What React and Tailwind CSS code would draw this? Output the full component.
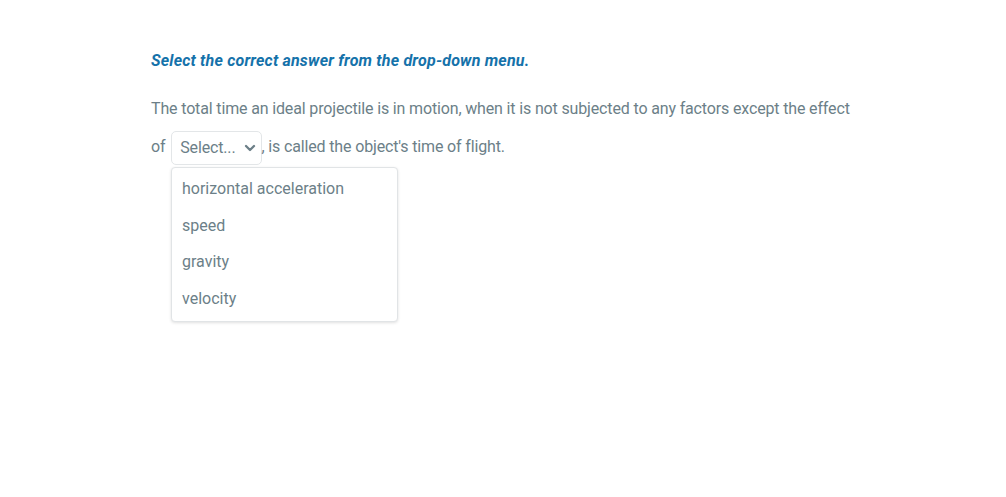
import { ChevronDown } from "lucide-react";

const options = ["horizontal acceleration", "speed", "gravity", "velocity"];

export default function App() {
  return (
    <div className="min-h-[497px] bg-white font-['Roboto',sans-serif] text-[#6c7f88]">
      <div className="pl-[151px] pt-[51px]">
        <h2 className="text-[16px] font-bold italic tracking-[0.2px] text-[#1572aa] leading-[20px]">
          Select the correct answer from the drop-down menu.
        </h2>
        <div className="relative mt-[19px] w-[706px]">
          <p className="text-[16px] tracking-[-0.15px] leading-[38px]">
            The total time an ideal projectile is in motion, when it is not subjected to any factors except the effect of{" "}
            <span className="ml-[2px] inline-flex h-[34px] items-center gap-[6px] rounded-[5px] border border-[#e3e6e8] pl-[8px] pr-[3px] align-middle">
              Select...
              <ChevronDown className="h-[16px] w-[16px] text-[#6c7f88]" strokeWidth={3.5} />
            </span>
            , is called the object's time of flight.
          </p>
          {/* open menu of the select */}
          <div className="absolute left-[20px] top-[77px] z-10 w-[227px] rounded-[4px] border border-[#e1e4e6] bg-white py-[3px] shadow-[0_1px_3px_rgba(0,0,0,0.12)]">
            {options.map((o) => (
              <div key={o} className="px-[10px] text-[16px] leading-[36.7px]">
                {o}
              </div>
            ))}
          </div>
        </div>
      </div>
    </div>
  );
}
